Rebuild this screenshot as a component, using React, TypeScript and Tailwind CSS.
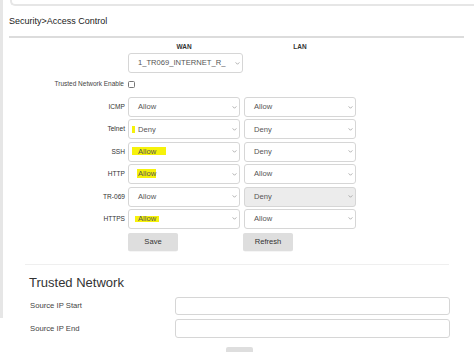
import type { FC, ReactNode } from 'react';

type Mark = 'bar' | 'ssh' | 'http' | 'https';

type ProtocolRow = {
	name: string;
	wan: string;
	lan: string;
	mark?: Mark;
	lanDisabled?: boolean;
};

const rows: ProtocolRow[] = [
	{ name: 'ICMP', wan: 'Allow', lan: 'Allow' },
	{ name: 'Telnet', wan: 'Deny', lan: 'Deny', mark: 'bar' },
	{ name: 'SSH', wan: 'Allow', lan: 'Deny', mark: 'ssh' },
	{ name: 'HTTP', wan: 'Allow', lan: 'Allow', mark: 'http' },
	{ name: 'TR-069', wan: 'Allow', lan: 'Deny', lanDisabled: true },
	{ name: 'HTTPS', wan: 'Allow', lan: 'Allow', mark: 'https' },
];

const Chevron: FC = function Chevron() {
	return (
		<svg viewBox="0 0 6 4" className="h-[3px] w-[5px] shrink-0 text-[#8a8a8a]" fill="none">
			<path d="M0.5 0.5 L3 3 L5.5 0.5" stroke="currentColor" strokeWidth="0.9" />
		</svg>
	);
};

// Highlighter strokes someone drew over the WAN column
function markedValue(value: string, mark?: Mark): ReactNode {
	switch (mark) {
		case 'bar':
			return (
				<>
					<span className="-ml-[6px] mr-[3.5px] h-[7px] w-[2.5px] bg-[#f6f20a]" />
					<span>{value}</span>
				</>
			);
		case 'ssh':
			return (
				<span className="-ml-[6px] -mt-[2px] bg-[#f6f20a] pt-[1px] pr-[10px] pl-[6px] leading-[7px]">
					{value}
				</span>
			);
		case 'http':
			return (
				<span className="-ml-[1px] -mt-[1px] bg-[#f6f20a] pt-[1px] pb-[1px] pl-[1px] leading-[7px]">
					{value}
				</span>
			);
		case 'https':
			return (
				<span className="-ml-[3px] bg-[#f6f20a] pr-[3px] pl-[3px] leading-[6px]">{value}</span>
			);
		default:
			return <span>{value}</span>;
	}
}

const Select: FC<{ value: string; mark?: Mark; disabled?: boolean; wide?: boolean }> =
	function Select({ value, mark, disabled, wide }) {
		return (
			<div
				className={`flex h-[20px] items-center justify-between rounded-[3px] border border-[#d6d6d6] pr-[2px] pl-[9px] text-[7.6px] text-[#555] ${
					wide ? 'w-[115px] h-[19px]' : 'w-[112px]'
				} ${disabled ? 'bg-[#ececec]' : 'bg-white'}`}
			>
				<div className="flex items-center">{markedValue(value, mark)}</div>
				<Chevron />
			</div>
		);
	};

const Button: FC<{ label: string }> = function Button({ label }) {
	return (
		<div className="flex h-[18px] w-[50px] items-center justify-center rounded-[2px] bg-[#dedede] text-[7.6px] text-[#333] shadow-[0_0.5px_0.5px_rgba(0,0,0,0.08)]">
			{label}
		</div>
	);
};

export default function App() {
	return (
		<div
			className="h-[352px] w-[474px] overflow-hidden bg-white text-[#333]"
			style={{ fontFamily: '"Liberation Sans", Arial, sans-serif' }}
		>
			<div className="flex items-start">
				<div className="h-[318px] w-[3px] shrink-0 bg-[#e6e6e6]" />
				<div className="flex flex-1 flex-col">
					<div className="ml-[7px] h-[6px] rounded-bl-[5px] border-b-2 border-l-2 border-[#e6e6e6]" />

					<div className="mt-[9px] ml-[6px] text-[9px] leading-[12px] text-[#1a1a1a]">
						Security&gt;Access Control
					</div>
					<div className="mt-[9px] ml-[6px] h-[2px] w-[455px] bg-[#dcdcdc]" />

					<div className="mt-[5px] flex text-[6.5px] leading-[8px] font-bold text-[#333]">
						<div className="ml-[125px] w-[112px] text-center">WAN</div>
						<div className="ml-[4px] w-[112px] text-center">LAN</div>
					</div>

					<div className="mt-[2px] ml-[125px]">
						<Select value="1_TR069_INTERNET_R_" wide />
					</div>

					<div className="mt-[6px] flex h-[10px] items-center">
						<div className="w-[121px] text-right text-[6.5px] text-[#444]">Trusted Network Enable</div>
						<div className="ml-[4px] h-[7px] w-[7px] rounded-[1.5px] border border-[#777] bg-white" />
					</div>

					<div className="mt-[8px] flex flex-col gap-[2.4px]">
						{rows.map((row) => (
							<div key={row.name} className="flex items-center">
								<div className="w-[122px] text-right text-[6.6px] text-[#333]">{row.name}</div>
								<div className="ml-[3px] flex gap-[4px]">
									<Select value={row.wan} mark={row.mark} />
									<Select value={row.lan} disabled={row.lanDisabled} />
								</div>
							</div>
						))}
					</div>

					<div className="mt-[4px] flex">
						<div className="ml-[125px]">
							<Button label="Save" />
						</div>
						<div className="ml-[65px]">
							<Button label="Refresh" />
						</div>
					</div>

					<div className="mt-[13px] ml-[22px] h-[1px] w-[424px] bg-[#efefef]" />

					<div className="mt-[10px] ml-[26px] text-[13px] leading-[16px] text-[#333]">
						Trusted Network
					</div>

					<div className="mt-[6px] flex items-center">
						<div className="ml-[27px] w-[145px] text-[7.7px] text-[#444]">Source IP Start</div>
						<div className="h-[18px] w-[275px] rounded-[3px] border border-[#d6d6d6] bg-white" />
					</div>
				</div>
			</div>

			<div className="mt-[1px] flex items-center">
				<div className="ml-[30px] w-[145px] text-[7.7px] text-[#444]">Source IP End</div>
				<div className="h-[19px] w-[275px] rounded-[3px] border border-[#d6d6d6] bg-white" />
			</div>

			<div className="mt-[9px] ml-[226px] h-[18px] w-[27px] rounded-[2px] bg-[#dedede]" />
		</div>
	);
}
